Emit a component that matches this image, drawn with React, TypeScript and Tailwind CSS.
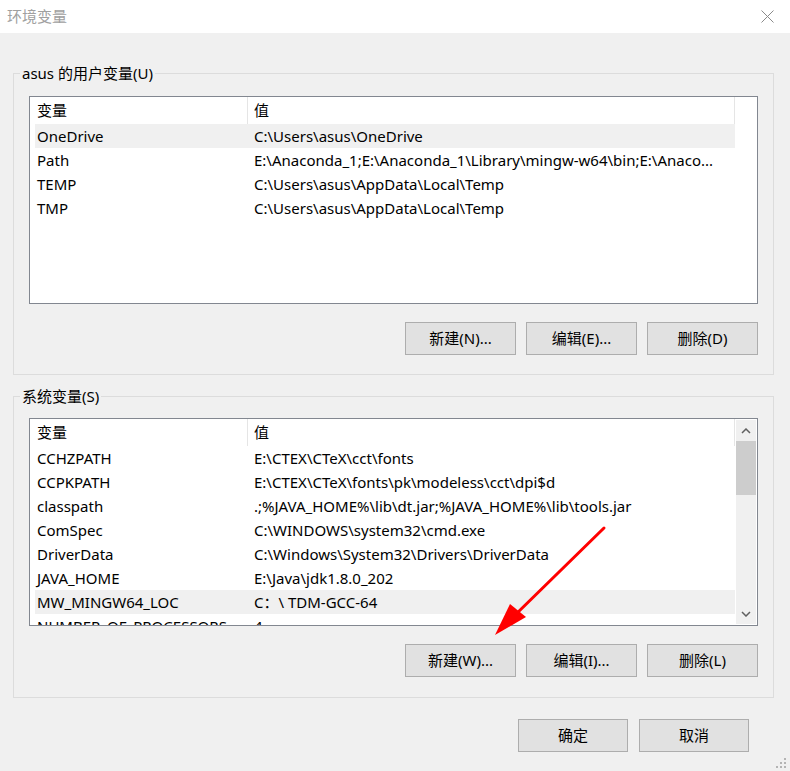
import React from "react";

type Row = { name: string; value: string; selected?: boolean };

const USER_VARS: Row[] = [
  { name: "OneDrive", value: "C:\\Users\\asus\\OneDrive", selected: true },
  {
    name: "Path",
    value: "E:\\Anaconda_1;E:\\Anaconda_1\\Library\\mingw-w64\\bin;E:\\Anaco...",
  },
  { name: "TEMP", value: "C:\\Users\\asus\\AppData\\Local\\Temp" },
  { name: "TMP", value: "C:\\Users\\asus\\AppData\\Local\\Temp" },
];

const SYSTEM_VARS: Row[] = [
  { name: "CCHZPATH", value: "E:\\CTEX\\CTeX\\cct\\fonts" },
  { name: "CCPKPATH", value: "E:\\CTEX\\CTeX\\fonts\\pk\\modeless\\cct\\dpi$d" },
  { name: "classpath", value: ".;%JAVA_HOME%\\lib\\dt.jar;%JAVA_HOME%\\lib\\tools.jar" },
  { name: "ComSpec", value: "C:\\WINDOWS\\system32\\cmd.exe" },
  { name: "DriverData", value: "C:\\Windows\\System32\\Drivers\\DriverData" },
  { name: "JAVA_HOME", value: "E:\\Java\\jdk1.8.0_202" },
  { name: "MW_MINGW64_LOC", value: "C：\\ TDM-GCC-64", selected: true },
  { name: "NUMBER_OF_PROCESSORS", value: "4" },
];

function WinButton({ label, wide }: { label: string; wide?: boolean }) {
  return (
    <div
      className={`${wide ? "w-[111px]" : "w-[110px]"} h-[33px] flex items-center justify-center bg-[#e1e1e1] border border-[#adadad] text-[15px] text-black`}
    >
      {label}
    </div>
  );
}

function VarList({ rows, scroll }: { rows: Row[]; scroll?: boolean }) {
  return (
    <div className="h-[208px] border border-[#828790] bg-white flex overflow-hidden">
      <div className="flex-1 pl-[5px] overflow-hidden">
        <div className="flex h-[27px] items-center">
          <div className="w-[213px] h-full flex items-center pl-[2px] border-r border-[#e5e5e5]">变量</div>
          <div className="w-[487px] h-full flex items-center pl-[6px] border-r border-[#e5e5e5]">值</div>
        </div>
        {rows.map((r) => (
          <div
            key={r.name}
            className={`flex h-[24px] w-[700px] items-center ${r.selected ? "bg-[#f0f0f0]" : ""}`}
          >
            <div className="w-[213px] pl-[2px] whitespace-nowrap overflow-hidden">{r.name}</div>
            <div className="w-[487px] pl-[6px] whitespace-nowrap overflow-hidden text-ellipsis">{r.value}</div>
          </div>
        ))}
      </div>
      {scroll && (
        <div className="w-[20px] my-[1px] mr-[1px] bg-[#f0f0f0] flex flex-col">
          <div className="h-[21px] flex items-center justify-center">
            <svg width="10" height="6" viewBox="0 0 10 6">
              <path d="M1 5 L5 1 L9 5" fill="none" stroke="#606060" strokeWidth="1.5" />
            </svg>
          </div>
          <div className="h-[54px] bg-[#cdcdcd]" />
          <div className="flex-1" />
          <div className="h-[21px] flex items-center justify-center">
            <svg width="10" height="6" viewBox="0 0 10 6">
              <path d="M1 1 L5 5 L9 1" fill="none" stroke="#606060" strokeWidth="1.5" />
            </svg>
          </div>
        </div>
      )}
    </div>
  );
}

export default function App() {
  return (
    <div
      className="relative w-[790px] h-[771px] bg-[#f0f0f0] overflow-hidden text-[15px] text-black"
      style={{ fontFamily: '"Noto Sans", "Noto Sans CJK SC", sans-serif' }}
    >
      {/* title bar */}
      <div className="h-[33px] bg-white flex items-center justify-between pl-[7px] pr-[16px]">
        <span className="text-[15px] text-[#a0a0a0] leading-none">环境变量</span>
        <svg width="13" height="13" viewBox="0 0 13 13">
          <path d="M0.5 0.5 L12.5 12.5 M12.5 0.5 L0.5 12.5" stroke="#8a8a8a" strokeWidth="1" />
        </svg>
      </div>

      {/* user variables */}
      <fieldset className="ml-[13px] mt-[30px] w-[761px] border border-[#dcdcdc] p-0 m-0">
        <legend className="ml-[6px] px-[2px] leading-[20px]">asus 的用户变量(U)</legend>
        <div className="px-[15px] pt-[13px] pb-[19px]">
          <VarList rows={USER_VARS} />
          <div className="flex justify-end gap-[10px] mt-[18px]">
            <WinButton label="新建(N)..." wide />
            <WinButton label="编辑(E)..." wide />
            <WinButton label="删除(D)" wide />
          </div>
        </div>
      </fieldset>

      {/* system variables */}
      <fieldset className="ml-[13px] mt-[11px] w-[761px] border border-[#dcdcdc] p-0">
        <legend className="ml-[6px] px-[2px] leading-[20px]">系统变量(S)</legend>
        <div className="px-[15px] pt-[12px] pb-[20px]">
          <VarList rows={SYSTEM_VARS} scroll />
          <div className="flex justify-end gap-[10px] mt-[18px]">
            <WinButton label="新建(W)..." wide />
            <WinButton label="编辑(I)..." wide />
            <WinButton label="删除(L)" wide />
          </div>
        </div>
      </fieldset>

      {/* dialog buttons */}
      <div className="flex justify-end gap-[11px] mt-[21px] pr-[41px]">
        <WinButton label="确定" />
        <WinButton label="取消" />
      </div>

      {/* resize grip */}
      <svg className="absolute right-[2px] bottom-[1px]" width="12" height="12" viewBox="0 0 12 12">
        {[
          [8, 0],
          [8, 4],
          [4, 4],
          [8, 8],
          [4, 8],
          [0, 8],
        ].map(([x, y]) => (
          <rect key={`${x}-${y}`} x={x} y={y} width="2" height="2" fill="#b4b4b4" />
        ))}
      </svg>

      {/* red annotation arrow */}
      <svg className="absolute left-0 top-0 pointer-events-none" width="790" height="771" viewBox="0 0 790 771">
        <line x1="604" y1="528" x2="512" y2="618" stroke="#ff0000" strokeWidth="3" strokeLinecap="round" />
        <polygon points="495,635 510,604 526,617" fill="#ff0000" />
      </svg>
    </div>
  );
}
